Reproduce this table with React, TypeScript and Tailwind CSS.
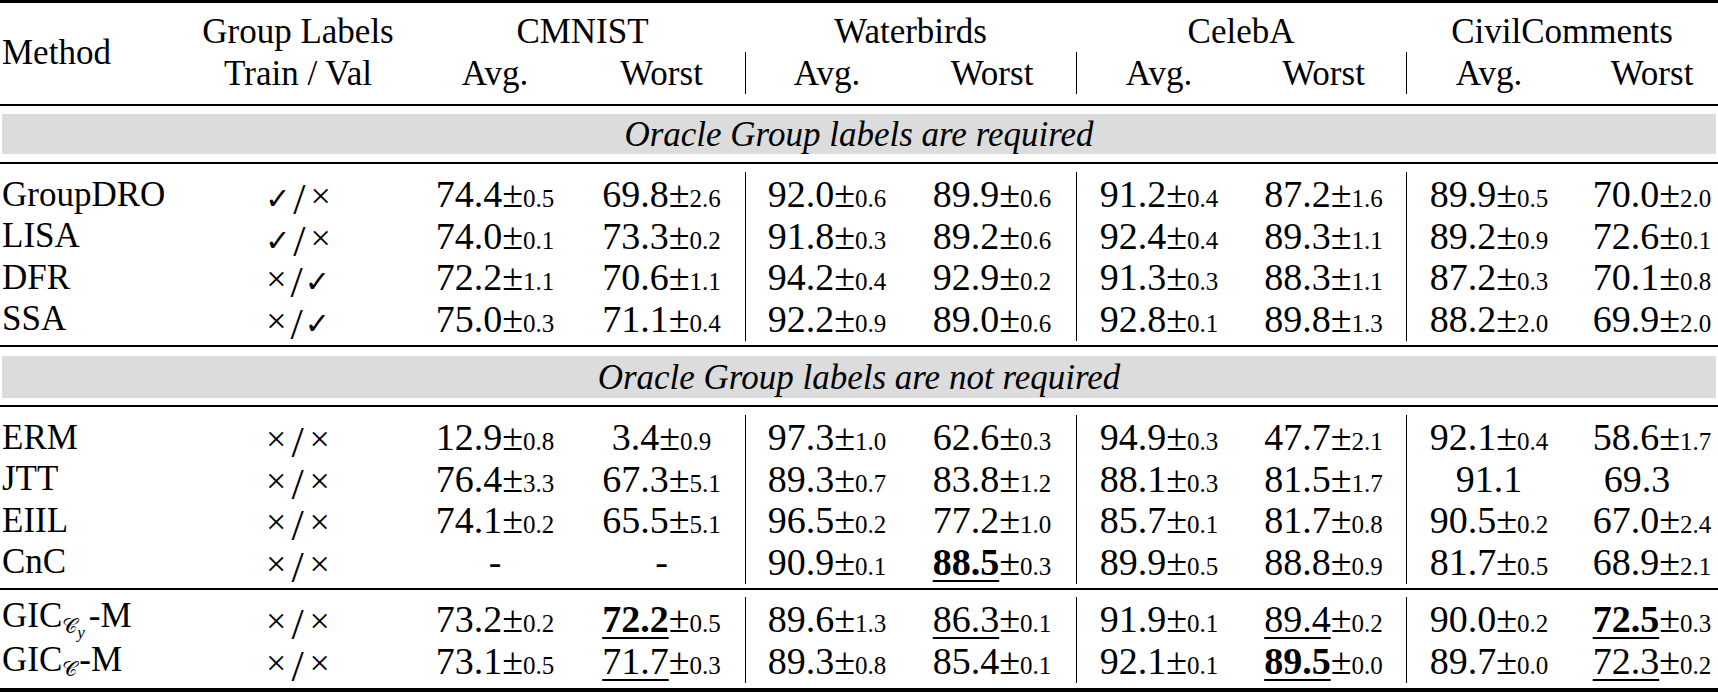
import React from "react";

type C = { v: string; s?: string; b?: boolean; u?: boolean; shift?: boolean };
type G = "cx" | "xc" | "xx";
type Row = { name: React.ReactNode; g: G; cells: C[] };

const n = (v: string, s?: string, b?: boolean, u?: boolean): C => ({ v, s, b, u });

const GRID =
  "grid grid-cols-[200px_212px_166px_167px_163px_168px_165px_165px_165px_147px]";

function colCls(i: number) {
  switch (i) {
    case 0:
      return "justify-start pl-[2px]";
    case 1:
      return "justify-center pr-[16px]";
    case 4:
    case 6:
    case 8:
      return "justify-center border-l-[1.5px] border-black";
    case 9:
      return "justify-center pl-[15px]";
    default:
      return "justify-center";
  }
}

function Check({ cls }: { cls: string }) {
  return (
    <span className={`font-['DejaVu_Sans'] text-[30px] font-bold relative top-[1px] ${cls}`}>✓</span>
  );
}

function Times({ cls }: { cls: string }) {
  return <span className={`text-[36px] ${cls}`}>×</span>;
}

function Slash() {
  return <span className="text-[44px] relative top-[6px] px-[1px]">/</span>;
}

function Marks({ g }: { g: G }) {
  if (g === "cx")
    return (
      <span className="inline-flex items-baseline whitespace-nowrap">
        <Check cls="mr-[2px]" />
        <Slash />
        <Times cls="ml-[4px]" />
      </span>
    );
  if (g === "xc")
    return (
      <span className="inline-flex items-baseline whitespace-nowrap">
        <Times cls="mr-[3px]" />
        <Slash />
        <Check cls="ml-[1px]" />
      </span>
    );
  return (
    <span className="inline-flex items-baseline whitespace-nowrap">
      <Times cls="mr-[4px]" />
      <Slash />
      <Times cls="ml-[5px]" />
    </span>
  );
}

function Num({ c }: { c: C }) {
  if (c.v === "-") return <span className="text-[38px]">-</span>;
  return (
    <span className={`whitespace-nowrap ${c.shift ? "mr-[30px]" : ""}`}>
      <span
        className={`text-[38px] ${c.b ? "font-bold" : ""} ${
          c.u ? "underline decoration-[1.5px] underline-offset-[5px]" : ""
        }`}
      >
        {c.v}
      </span>
      {c.s && (
        <>
          <span className="text-[38px]">±</span>
          <span className="text-[25px]">{c.s}</span>
        </>
      )}
    </span>
  );
}

const gicY = (
  <span className="whitespace-nowrap">
    GIC
    <span className="font-['DejaVu_Serif'] text-[21px] align-[-6px]">
      𝒞
      <span className="font-['Liberation_Serif'] italic text-[17px] align-[-5px]">y</span>
    </span>
    <span className="ml-[4px]">-M</span>
  </span>
);

const gicC = (
  <span className="whitespace-nowrap">
    GIC
    <span className="font-['DejaVu_Serif'] text-[21px] align-[-5px]">𝒞</span>
    <span className="ml-[2px]">-M</span>
  </span>
);

const block1: Row[] = [
  {
    name: "GroupDRO",
    g: "cx",
    cells: [n("74.4", "0.5"), n("69.8", "2.6"), n("92.0", "0.6"), n("89.9", "0.6"), n("91.2", "0.4"), n("87.2", "1.6"), n("89.9", "0.5"), n("70.0", "2.0")],
  },
  {
    name: "LISA",
    g: "cx",
    cells: [n("74.0", "0.1"), n("73.3", "0.2"), n("91.8", "0.3"), n("89.2", "0.6"), n("92.4", "0.4"), n("89.3", "1.1"), n("89.2", "0.9"), n("72.6", "0.1")],
  },
  {
    name: "DFR",
    g: "xc",
    cells: [n("72.2", "1.1"), n("70.6", "1.1"), n("94.2", "0.4"), n("92.9", "0.2"), n("91.3", "0.3"), n("88.3", "1.1"), n("87.2", "0.3"), n("70.1", "0.8")],
  },
  {
    name: "SSA",
    g: "xc",
    cells: [n("75.0", "0.3"), n("71.1", "0.4"), n("92.2", "0.9"), n("89.0", "0.6"), n("92.8", "0.1"), n("89.8", "1.3"), n("88.2", "2.0"), n("69.9", "2.0")],
  },
];

const block2: Row[] = [
  {
    name: "ERM",
    g: "xx",
    cells: [n("12.9", "0.8"), n("3.4", "0.9"), n("97.3", "1.0"), n("62.6", "0.3"), n("94.9", "0.3"), n("47.7", "2.1"), n("92.1", "0.4"), n("58.6", "1.7")],
  },
  {
    name: "JTT",
    g: "xx",
    cells: [n("76.4", "3.3"), n("67.3", "5.1"), n("89.3", "0.7"), n("83.8", "1.2"), n("88.1", "0.3"), n("81.5", "1.7"), n("91.1"), { v: "69.3", shift: true }],
  },
  {
    name: "EIIL",
    g: "xx",
    cells: [n("74.1", "0.2"), n("65.5", "5.1"), n("96.5", "0.2"), n("77.2", "1.0"), n("85.7", "0.1"), n("81.7", "0.8"), n("90.5", "0.2"), n("67.0", "2.4")],
  },
  {
    name: "CnC",
    g: "xx",
    cells: [n("-"), n("-"), n("90.9", "0.1"), n("88.5", "0.3", true, true), n("89.9", "0.5"), n("88.8", "0.9"), n("81.7", "0.5"), n("68.9", "2.1")],
  },
];

const block3: Row[] = [
  {
    name: gicY,
    g: "xx",
    cells: [n("73.2", "0.2"), n("72.2", "0.5", true, true), n("89.6", "1.3"), n("86.3", "0.1", false, true), n("91.9", "0.1"), n("89.4", "0.2", false, true), n("90.0", "0.2"), n("72.5", "0.3", true, true)],
  },
  {
    name: gicC,
    g: "xx",
    cells: [n("73.1", "0.5"), n("71.7", "0.3", false, true), n("89.3", "0.8"), n("85.4", "0.1"), n("92.1", "0.1"), n("89.5", "0.0", true, true), n("89.7", "0.0"), n("72.3", "0.2", false, true)],
  },
];

function DataRow({ r }: { r: Row }) {
  return (
    <div className={`${GRID} h-[41.5px]`}>
      <div className={`flex items-center text-[35px] ${colCls(0)}`}>{r.name}</div>
      <div className={`flex items-center ${colCls(1)}`}>
        <Marks g={r.g} />
      </div>
      {r.cells.map((c, i) => (
        <div key={i} className={`flex items-center ${colCls(i + 2)}`}>
          <Num c={c} />
        </div>
      ))}
    </div>
  );
}

function Block({ rows, cls }: { rows: Row[]; cls: string }) {
  return (
    <div className={cls}>
      {rows.map((r, i) => (
        <DataRow key={i} r={r} />
      ))}
    </div>
  );
}

function Band({ text, cls }: { text: string; cls: string }) {
  return (
    <div className={`mx-[2px] bg-[#dcdcdc] flex items-center justify-center italic text-[35px] ${cls}`}>
      {text}
    </div>
  );
}

export default function App() {
  const cell = "flex items-center";
  return (
    <div className="w-[1718px] h-[693px] bg-white text-black font-['Liberation_Serif'] leading-none overflow-hidden">
      <div className="h-[3px] bg-black" />
      <div className={`${GRID} grid-rows-[42px_42px] pt-[7px] pb-[10px] text-[35px]`}>
        <div className={`${cell} col-start-1 row-start-1 row-span-2 justify-start pl-[2px]`}>Method</div>
        <div className={`${cell} col-start-2 row-start-1 justify-center pr-[16px]`}>Group Labels</div>
        <div className={`${cell} col-start-3 col-span-2 row-start-1 justify-center pl-[8px]`}>CMNIST</div>
        <div className={`${cell} col-start-5 col-span-2 row-start-1 justify-center`}>Waterbirds</div>
        <div className={`${cell} col-start-7 col-span-2 row-start-1 justify-center`}>CelebA</div>
        <div className={`${cell} col-start-9 col-span-2 row-start-1 justify-center`}>CivilComments</div>
        <div className={`${cell} col-start-2 row-start-2 ${colCls(1)}`}>Train / Val</div>
        <div className={`${cell} col-start-3 row-start-2 ${colCls(2)}`}>Avg.</div>
        <div className={`${cell} col-start-4 row-start-2 ${colCls(3)}`}>Worst</div>
        <div className={`${cell} col-start-5 row-start-2 ${colCls(4)}`}>Avg.</div>
        <div className={`${cell} col-start-6 row-start-2 ${colCls(5)}`}>Worst</div>
        <div className={`${cell} col-start-7 row-start-2 ${colCls(6)}`}>Avg.</div>
        <div className={`${cell} col-start-8 row-start-2 ${colCls(7)}`}>Worst</div>
        <div className={`${cell} col-start-9 row-start-2 ${colCls(8)}`}>Avg.</div>
        <div className={`${cell} col-start-10 row-start-2 ${colCls(9)}`}>Worst</div>
      </div>
      <div className="h-[2px] bg-black" />
      <Band text="Oracle Group labels are required" cls="mt-[8px] h-[40px]" />
      <div className="mt-[8px] h-[2px] bg-black" />
      <Block rows={block1} cls="pt-[8px] pb-[7px]" />
      <div className="h-[2px] bg-black" />
      <Band text="Oracle Group labels are not required" cls="mt-[9px] h-[42px]" />
      <div className="mt-[7px] h-[2px] bg-black" />
      <Block rows={block2} cls="pt-[8px] pb-[7px]" />
      <div className="h-[2px] bg-black" />
      <Block rows={block3} cls="pt-[7px] pb-[8px]" />
      <div className="h-[4px] bg-black" />
    </div>
  );
}
